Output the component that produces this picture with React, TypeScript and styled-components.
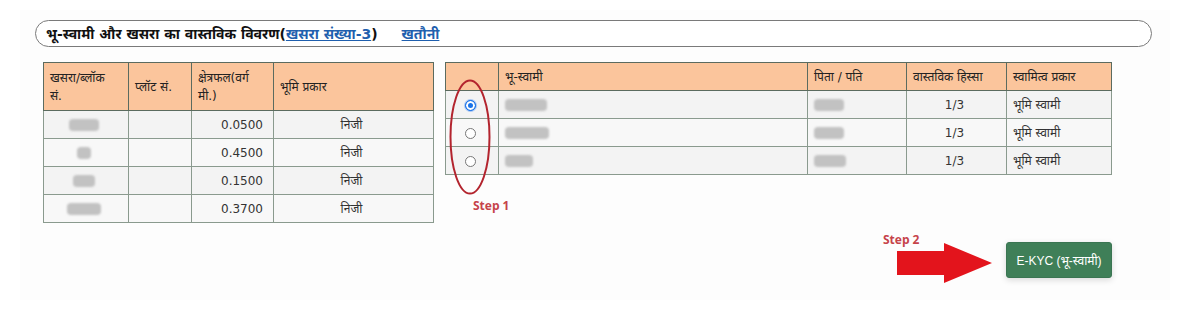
import React from "react";
import styled, { createGlobalStyle } from "styled-components";

const GlobalStyle = createGlobalStyle`
  html, body {
    margin: 0;
    padding: 0;
    background: #ffffff;
  }
  body {
    font-family: "DejaVu Sans", "Noto Sans", sans-serif;
    color: #222;
  }
`;

const landRows = [
  { khasra: 30, area: "0.0500", type: "निजी" },
  { khasra: 14, area: "0.4500", type: "निजी" },
  { khasra: 22, area: "0.1500", type: "निजी" },
  { khasra: 34, area: "0.3700", type: "निजी" },
];

const ownerRows = [
  { name: 42, father: 30, share: "1/3", kind: "भूमि स्वामी", checked: true },
  { name: 44, father: 30, share: "1/3", kind: "भूमि स्वामी", checked: false },
  { name: 28, father: 32, share: "1/3", kind: "भूमि स्वामी", checked: false },
];

const App = () => {
  return (
    <>
      <GlobalStyle />
      <Page>
        <Panel>
          <Legend>
            <LegendText>
              भू-स्वामी और खसरा का वास्तविक विवरण(<Link href="#">खसरा संख्या-3</Link>)
            </LegendText>
            <Link href="#">खतौनी</Link>
          </Legend>

          <Tables>
            <Table $width={390}>
              <colgroup>
                <col style={{ width: 85 }} />
                <col style={{ width: 63 }} />
                <col style={{ width: 82 }} />
                <col style={{ width: 160 }} />
              </colgroup>
              <thead>
                <tr>
                  <Th $h={48}>
                    खसरा/ब्लॉक
                    <br />
                    सं.
                  </Th>
                  <Th $h={48}>प्लॉट सं.</Th>
                  <Th $h={48}>क्षेत्रफल(वर्ग मी.)</Th>
                  <Th $h={48}>भूमि प्रकार</Th>
                </tr>
              </thead>
              <tbody>
                {landRows.map((r, i) => (
                  <tr key={i}>
                    <Td $align="center">
                      <Blur style={{ width: r.khasra }} />
                    </Td>
                    <Td />
                    <Td $align="right">{r.area}</Td>
                    <Td $align="center">{r.type}</Td>
                  </tr>
                ))}
              </tbody>
            </Table>

            <Table $width={666}>
              <colgroup>
                <col style={{ width: 53 }} />
                <col style={{ width: 309 }} />
                <col style={{ width: 99 }} />
                <col style={{ width: 100 }} />
                <col style={{ width: 105 }} />
              </colgroup>
              <thead>
                <tr>
                  <Th $h={28}></Th>
                  <Th $h={28}>भू-स्वामी</Th>
                  <Th $h={28}>पिता / पति</Th>
                  <Th $h={28}>वास्तविक हिस्सा</Th>
                  <Th $h={28}>स्वामित्व प्रकार</Th>
                </tr>
              </thead>
              <tbody>
                {ownerRows.map((r, i) => (
                  <tr key={i}>
                    <Td $align="center">
                      <Radio $checked={r.checked} />
                    </Td>
                    <Td>
                      <Blur style={{ width: r.name }} />
                    </Td>
                    <Td>
                      <Blur style={{ width: r.father }} />
                    </Td>
                    <Td $align="center">{r.share}</Td>
                    <Td>{r.kind}</Td>
                  </tr>
                ))}
              </tbody>
            </Table>
          </Tables>

          <Actions>
            <KycButton>E-KYC (भू-स्वामी)</KycButton>
          </Actions>

          {/* annotations drawn over the screenshot */}
          <Ellipse width="44" height="118" viewBox="0 0 44 118">
            <ellipse cx="22" cy="59" rx="19.5" ry="56.5" fill="none" stroke="#b3242e" strokeWidth="2" />
          </Ellipse>
          <StepLabel style={{ left: 453, top: 187 }}>Step 1</StepLabel>
          <StepLabel style={{ left: 863, top: 221 }}>Step 2</StepLabel>
          <Arrow width="96" height="42" viewBox="0 0 96 42">
            <polygon points="0,8 47,8 47,0 95,20 47,40 47,32 0,32" fill="#e3141c" />
          </Arrow>
        </Panel>
      </Page>
    </>
  );
};

export default App;

const Page = styled.div`
  width: 1200px;
  height: 311px;
  overflow: hidden;
`;

const Panel = styled.div`
  position: relative;
  margin: 10px 30px 0 20px;
  height: 290px;
  background: #fdfdfd;
  padding: 10px 0 0 15px;
  box-sizing: border-box;
`;

const Legend = styled.div`
  display: flex;
  align-items: center;
  gap: 24px;
  width: 1117px;
  height: 27px;
  box-sizing: border-box;
  border: 1px solid #7a7a7a;
  border-radius: 14px;
  padding: 0 10px;
  background: #fff;
`;

const LegendText = styled.span`
  font-size: 14px;
  font-weight: bold;
  color: #111;
`;

const Link = styled.a`
  color: #1f5fae;
  font-weight: bold;
  font-size: 14px;
  text-decoration: underline;
`;

const Tables = styled.div`
  display: flex;
  align-items: flex-start;
  gap: 11px;
  margin: 15px 0 0 8px;
`;

const Table = styled.table<{ $width: number }>`
  width: ${(p) => p.$width}px;
  table-layout: fixed;
  border-collapse: collapse;
  border: 1px solid #5b6b5f;
  font-size: 12px;
`;

const Th = styled.th<{ $h: number }>`
  height: ${(p) => p.$h}px;
  background: #fbc59c;
  border: 1px solid #5b6b5f;
  text-align: left;
  font-weight: normal;
  padding: 2px 6px;
  color: #222;
  box-sizing: border-box;
  line-height: 18px;
`;

const Td = styled.td<{ $align?: string }>`
  height: 28px;
  box-sizing: border-box;
  border: 1px solid #8a9a8e;
  padding: 0 10px 0 6px;
  text-align: ${(p) => p.$align || "left"};
  background: #f3f3f3;
  color: #333;
  tr:nth-child(even) > & {
    background: #f8f8f8;
  }
`;

const Blur = styled.span`
  display: inline-block;
  height: 12px;
  border-radius: 4px;
  background: #c2c2c2;
  filter: blur(1px);
  vertical-align: middle;
`;

const Radio = styled.span<{ $checked: boolean }>`
  display: inline-block;
  width: 11px;
  height: 11px;
  border-radius: 50%;
  box-sizing: border-box;
  border: 1px solid ${(p) => (p.$checked ? "#1a73e8" : "#777")};
  background: ${(p) => (p.$checked ? "#1a73e8" : "#fff")};
  box-shadow: ${(p) =>
    p.$checked ? "inset 0 0 0 2px #fff, 0 0 0 1px #a9c8f3" : "none"};
  vertical-align: middle;
`;

const Actions = styled.div`
  display: flex;
  justify-content: flex-end;
  width: 1077px;
  margin-top: 19px;
`;

const KycButton = styled.button`
  width: 106px;
  height: 36px;
  background: #3f7f58;
  color: #fff;
  border: 1px solid #3a7552;
  border-radius: 3px;
  font-family: "Liberation Sans", "Noto Sans", sans-serif;
  font-size: 12px;
  box-shadow: 0 2px 6px rgba(0, 0, 0, 0.15);
`;

const Ellipse = styled.svg`
  position: absolute;
  left: 428px;
  top: 68px;
`;

const StepLabel = styled.span`
  position: absolute;
  font-family: "Open Sans", "Liberation Sans", sans-serif;
  font-weight: bold;
  font-size: 12px;
  color: #c6434a;
`;

const Arrow = styled.svg`
  position: absolute;
  left: 877px;
  top: 233px;
`;
